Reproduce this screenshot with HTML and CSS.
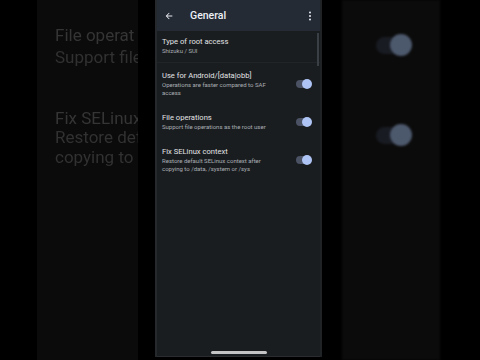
FILE: index.html
```html
<!DOCTYPE html>
<html>
<head>
<meta charset="utf-8">
<link rel="stylesheet" href="styles.css">
</head>
<body>
<div class="stage">
  <div class="blur blur-left">
    <div class="bl-item">
      <div class="bl-title">File operat</div>
      <div class="bl-sub">Support file</div>
    </div>
    <div class="bl-item second">
      <div class="bl-title">Fix SELinux</div>
      <div class="bl-sub">Restore defa</div>
      <div class="bl-sub">copying to /</div>
    </div>
  </div>
  <div class="phone">
    <div class="appbar">
      <svg class="back" width="10" height="10" viewBox="0 0 24 24"><path d="M20 11H7.83l5.59-5.59L12 4l-8 8 8 8 1.41-1.41L7.83 13H20v-2z" fill="#e8eaf0"/></svg>
      <div class="title">General</div>
      <svg class="more" width="4" height="10" viewBox="0 0 4 10"><circle cx="2" cy="1.5" r="1" fill="#e8eaf0"/><circle cx="2" cy="5" r="1" fill="#e8eaf0"/><circle cx="2" cy="8.5" r="1" fill="#e8eaf0"/></svg>
    </div>
    <div class="list">
      <div class="scrollbar"></div>
      <div class="row first">
        <div class="text">
          <div class="rt">Type of root access</div>
          <div class="rs">Shizuku / SUI</div>
        </div>
      </div>
      <div class="row">
        <div class="text">
          <div class="rt">Use for Android/[data|obb]</div>
          <div class="rs">Operations are faster compared to SAF access</div>
        </div>
        <div class="toggle"><span class="knob"></span></div>
      </div>
      <div class="row">
        <div class="text">
          <div class="rt">File operations</div>
          <div class="rs">Support file operations as the root user</div>
        </div>
        <div class="toggle"><span class="knob"></span></div>
      </div>
      <div class="row">
        <div class="text">
          <div class="rt">Fix SELinux context</div>
          <div class="rs">Restore default SELinux context after copying to /data, /system or /sys</div>
        </div>
        <div class="toggle"><span class="knob"></span></div>
      </div>
    </div>
    <div class="navbar"><span class="handle"></span></div>
  </div>
  <div class="blur blur-right">
    <div class="br-toggle"><span class="br-knob"></span></div>
    <div class="br-toggle second"><span class="br-knob"></span></div>
  </div>
</div>
</body>
</html>
```
FILE: styles.css
```css
html, body {
  margin: 0;
  padding: 0;
  background: #000;
  width: 480px;
  height: 360px;
  overflow: hidden;
  font-family: Roboto, "Noto Sans", sans-serif;
}
.stage {
  display: flex;
  height: 360px;
  padding-left: 37px;
}
.blur {
  background: #0b0b0b;
  height: 360px;
  flex: none;
}
.blur-left {
  width: 101px;
  margin-right: 17px;
  padding-left: 18px;
  padding-top: 25px;
  box-sizing: border-box;
  overflow: hidden;
  white-space: nowrap;
  filter: blur(0.7px);
}
.bl-title {
  color: #353535;
  font-size: 17px;
  line-height: 20px;
  margin-bottom: 2px;
}
.bl-sub {
  color: #313131;
  font-size: 17px;
  line-height: 20px;
}
.bl-item.second {
  margin-top: 41px;
}
.bl-item.second .bl-title {
  margin-bottom: 0;
}
.bl-item.second .bl-sub {
  line-height: 19.5px;
}
.phone {
  width: 167px;
  height: 357px;
  flex: none;
  background: #1a1d20;
  display: flex;
  flex-direction: column;
  border-left: 2px solid #26292c;
  border-right: 2px solid #202326;
  box-sizing: border-box;
  position: relative;
}
.appbar {
  height: 31px;
  background: #242b35;
  display: flex;
  align-items: center;
  padding: 0 8px 0 7px;
  flex: none;
}
.back { flex: none; }
.title {
  color: #eef0f5;
  font-size: 10.5px;
  font-weight: 500;
  margin-left: 16px;
  flex: 1;
}
.more { flex: none; }
.list {
  flex: 1;
  position: relative;
}
.scrollbar {
  position: absolute;
  right: 1px;
  top: 2px;
  width: 2px;
  height: 33px;
  background: #3a3f46;
}
.row {
  display: flex;
  align-items: center;
  padding: 8px 9px 8px 5px;
}
.row.first {
  padding-top: 6px;
  border-bottom: 1px solid #212428;
  padding-bottom: 7px;
}
.text { flex: 1; }
.rt {
  color: #e2e3e5;
  font-size: 7.6px;
  font-weight: 400;
  line-height: 10px;
}
.rs {
  color: #a9adb3;
  font-size: 6px;
  line-height: 8px;
  padding-right: 18px;
}
.toggle {
  flex: none;
  width: 15px;
  height: 8px;
  border-radius: 4px;
  background: #4b5264;
  position: relative;
}
.knob {
  position: absolute;
  right: -1px;
  top: -1px;
  width: 10px;
  height: 10px;
  border-radius: 50%;
  background: #aec4f4;
}
.navbar {
  height: 18px;
  flex: none;
  display: flex;
  justify-content: center;
  align-items: flex-start;
  padding-top: 12px;
  box-sizing: border-box;
  border-bottom: 1px solid #2a2d30;
}
.handle {
  width: 56px;
  height: 3px;
  border-radius: 2px;
  background: #c4c4c4;
}
.blur-right {
  width: 98px;
  margin-left: 20px;
  padding-top: 37px;
  box-sizing: border-box;
  filter: blur(0.8px);
}
.br-toggle {
  margin-left: 34px;
  width: 33px;
  height: 17px;
  border-radius: 9px;
  background: #181b22;
  position: relative;
}
.br-toggle.second {
  margin-top: 73px;
}
.br-knob {
  position: absolute;
  right: -3px;
  top: -3px;
  width: 22px;
  height: 22px;
  border-radius: 50%;
  background: #4c586c;
}
```
